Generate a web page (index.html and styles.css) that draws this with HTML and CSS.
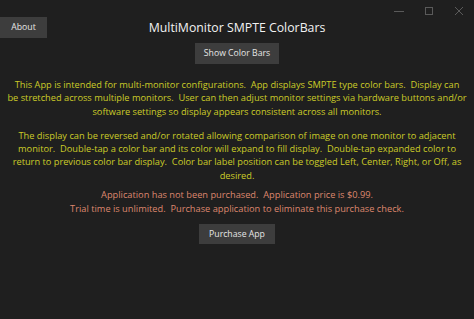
FILE: index.html
```
<!DOCTYPE html>
<html lang="en">
<head>
<meta charset="utf-8">
<title>MultiMonitor SMPTE ColorBars</title>
<link rel="stylesheet" href="styles.css">
</head>
<body>
<div class="caption">
  <span class="cap-btn"><svg width="10" height="10" viewBox="0 0 10 10"><path d="M0 5.5H10" stroke="#5a5a5a" stroke-width="1"/></svg></span>
  <span class="cap-btn"><svg width="10" height="10" viewBox="0 0 10 10"><rect x="1.5" y="1.5" width="7" height="7" fill="none" stroke="#5a5a5a" stroke-width="1"/></svg></span>
  <span class="cap-btn"><svg width="10" height="10" viewBox="0 0 10 10"><path d="M1 1L9 9M9 1L1 9" stroke="#5a5a5a" stroke-width="1"/></svg></span>
</div>
<main class="app">
  <header class="top">
    <button class="btn about">About</button>
    <h1 class="title">MultiMonitor SMPTE ColorBars</h1>
    <span class="spacer"></span>
  </header>
  <button class="btn show">Show Color Bars</button>
  <p class="info">This App is intended for multi-monitor configurations.&nbsp; App displays SMPTE type color bars.&nbsp; Display can<br>be stretched across multiple monitors.&nbsp; User can then adjust monitor settings via hardware buttons and/or<br>software settings so display appears consistent across all monitors.</p>
  <p class="info second">The display can be reversed and/or rotated allowing comparison of image on one monitor to adjacent<br>monitor.&nbsp; Double-tap a color bar and its color will expand to fill display.&nbsp; Double-tap expanded color to<br>return to previous color bar display.&nbsp; Color bar label position can be toggled Left, Center, Right, or Off, as<br>desired.</p>
  <p class="purchase">Application has not been purchased.&nbsp; Application price is $0.99.<br>Trial time is unlimited.&nbsp; Purchase application to eliminate this purchase check.</p>
  <button class="btn buy">Purchase App</button>
</main>
</body>
</html>
```
FILE: styles.css
```
html, body {
  margin: 0;
  padding: 0;
  background: #1f1f1f;
  height: 100%;
}
body {
  font-family: "Open Sans", "Noto Sans", sans-serif;
  color: #e8e8e8;
  overflow: hidden;
}
.caption {
  position: absolute;
  top: 0;
  right: 0;
  display: flex;
}
.cap-btn {
  width: 30px;
  height: 22px;
  display: flex;
  align-items: center;
  justify-content: center;
}
.app {
  display: flex;
  flex-direction: column;
  align-items: center;
}
.top {
  align-self: stretch;
  display: grid;
  grid-template-columns: 1fr auto 1fr;
  align-items: center;
  margin-top: 17px;
}
.title {
  margin: 0;
  font-weight: 400;
  font-size: 12.3px;
  color: #f2f2f2;
  white-space: nowrap;
}
.btn {
  font-family: inherit;
  background: #3d3d3d;
  color: #e6e6e6;
  border: 0;
  border-radius: 0;
  padding: 0;
  height: 21px;
  font-size: 8.7px;
  line-height: 21px;
}
.about {
  justify-self: start;
  width: 47px;
}
.show {
  margin-top: 5px;
  width: 84px;
}
.info, .purchase {
  margin: 0;
  text-align: center;
  font-size: 9.25px;
  line-height: 13.3px;
  white-space: nowrap;
}
.info {
  color: #cccc28;
  margin-top: 14px;
}
.info.second {
  margin-top: 11px;
}
.purchase {
  color: #de876e;
  margin-top: 6px;
  line-height: 13.6px;
}
.buy {
  margin-top: 9px;
  width: 76px;
  height: 20px;
  line-height: 20px;
}
```
